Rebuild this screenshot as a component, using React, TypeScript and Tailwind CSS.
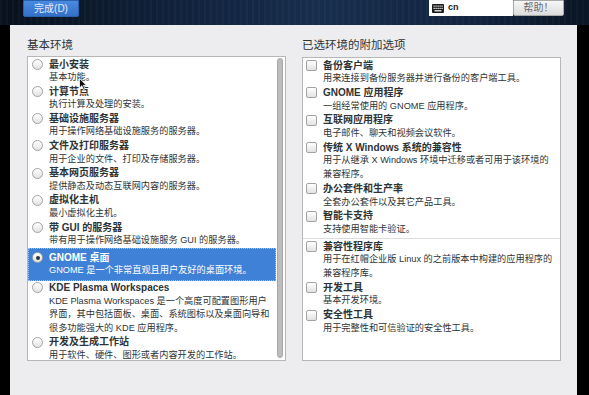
import React from "react";

type Item = { title: string; desc: React.ReactNode; selected?: boolean };

const envs: Item[] = [
  { title: "最小安装", desc: "基本功能。" },
  { title: "计算节点", desc: "执行计算及处理的安装。" },
  { title: "基础设施服务器", desc: "用于操作网络基础设施服务的服务器。" },
  { title: "文件及打印服务器", desc: "用于企业的文件、打印及存储服务器。" },
  { title: "基本网页服务器", desc: "提供静态及动态互联网内容的服务器。" },
  { title: "虚拟化主机", desc: "最小虚拟化主机。" },
  { title: "带 GUI 的服务器", desc: "带有用于操作网络基础设施服务 GUI 的服务器。" },
  { title: "GNOME 桌面", desc: "GNOME 是一个非常直观且用户友好的桌面环境。", selected: true },
  {
    title: "KDE Plasma Workspaces",
    desc: (
      <>
        KDE Plasma Workspaces 是一个高度可配置图形用户
        <br />
        界面，其中包括面板、桌面、系统图标以及桌面向导和
        <br />
        很多功能强大的 KDE 应用程序。
      </>
    ),
  },
  { title: "开发及生成工作站", desc: "用于软件、硬件、图形或者内容开发的工作站。" },
];

const addonsTop: Item[] = [
  { title: "备份客户端", desc: "用来连接到备份服务器并进行备份的客户端工具。" },
  { title: "GNOME 应用程序", desc: "一组经常使用的 GNOME 应用程序。" },
  { title: "互联网应用程序", desc: "电子邮件、聊天和视频会议软件。" },
  {
    title: "传统 X Windows 系统的兼容性",
    desc: (
      <>
        用于从继承 X Windows 环境中迁移或者可用于该环境的
        <br />
        兼容程序。
      </>
    ),
  },
  { title: "办公套件和生产率", desc: "全套办公套件以及其它产品工具。" },
  { title: "智能卡支持", desc: "支持使用智能卡验证。" },
];

const addonsBottom: Item[] = [
  {
    title: "兼容性程序库",
    desc: (
      <>
        用于在红帽企业版 Linux 的之前版本中构建的应用程序的
        <br />
        兼容程序库。
      </>
    ),
  },
  { title: "开发工具", desc: "基本开发环境。" },
  { title: "安全性工具", desc: "用于完整性和可信验证的安全性工具。" },
];

function Radio({ on }: { on?: boolean }) {
  return (
    <span className="flex h-[11px] w-[11px] items-center justify-center rounded-full border border-[#a3a3a3] bg-[linear-gradient(#ffffff,#e2e2e2)]">
      {on && <span className="h-[4px] w-[4px] rounded-full bg-[#2e3436]" />}
    </span>
  );
}

function Check() {
  return (
    <span className="block h-[11px] w-[11px] rounded-[2px] border border-[#a3a3a3] bg-[linear-gradient(#ffffff,#e2e2e2)]" />
  );
}

function EnvRow({ item }: { item: Item }) {
  const sel = item.selected;
  return (
    <div
      className={
        sel
          ? "flex border border-dotted border-[#9cc0ec] bg-[#3f81d6] py-[2px] pl-[3px] text-white"
          : "flex pl-[4px] text-[#2e3436]"
      }
    >
      <div className="flex h-[13.6px] items-center">
        <Radio on={sel} />
      </div>
      <div className="ml-[6px]">
        <div className="text-[10px] font-bold leading-[13.6px]">{item.title}</div>
        <div className="text-[9.2px] leading-[13.6px]">{item.desc}</div>
      </div>
    </div>
  );
}

function AddonRow({ item }: { item: Item }) {
  return (
    <div className="flex pl-[3px] text-[#2e3436]">
      <div className="flex h-[13.7px] items-center">
        <Check />
      </div>
      <div className="ml-[6px]">
        <div className="text-[10px] font-bold leading-[13.7px]">{item.title}</div>
        <div className="text-[9.2px] leading-[13.7px]">{item.desc}</div>
      </div>
    </div>
  );
}

function KeyboardIcon() {
  return (
    <svg width="12" height="9" viewBox="0 0 12 9">
      <rect x="0" y="0" width="12" height="9" rx="1" fill="#1b1b1b" />
      {[1.5, 3.5, 5.5, 7.5, 9.5].map((x) => (
        <rect key={"a" + x} x={x} y="1.5" width="1.2" height="1.2" fill="#fff" />
      ))}
      {[1.5, 3.5, 5.5, 7.5, 9.5].map((x) => (
        <rect key={"b" + x} x={x} y="3.8" width="1.2" height="1.2" fill="#fff" />
      ))}
      <rect x="2.5" y="6.2" width="7" height="1.2" fill="#fff" />
    </svg>
  );
}

export default function App() {
  return (
    <div
      className="relative flex h-[395px] w-[589px] flex-col overflow-hidden bg-black"
      style={{ fontFamily: '"Liberation Sans", "Noto Sans CJK SC", sans-serif' }}
    >
      {/* top bar */}
      <header className="flex h-[25px] shrink-0 items-start bg-[repeating-linear-gradient(90deg,rgba(255,255,255,0.025)_0px,rgba(255,255,255,0.025)_2px,transparent_2px,transparent_6px),linear-gradient(90deg,#08111d,#10223c_30%,#182e4e_55%,#12243f_80%,#0a1524)]">
        <button className="ml-[23px] h-[17px] w-[56px] rounded-b-[2px] border border-[#2a62b0] bg-[linear-gradient(#4a8ae0,#3470c8)] text-[10px] leading-[15px] text-[#e3ecf8]">
          完成(D)
        </button>
        <div className="flex-1" />
        <div className="flex h-[16px] w-[84px] items-center gap-[4px] bg-white pl-[3px]">
          <KeyboardIcon />
          <span className="text-[9px] font-bold text-[#222]">cn</span>
        </div>
        <button className="mr-[25px] h-[16px] w-[51px] rounded-b-[2px] border border-[#a9a9a9] bg-[linear-gradient(#f6f6f6,#dcdcdc)] text-[10px] leading-[14px] text-[#6a6a6a]">
          帮助！
        </button>
      </header>

      {/* content */}
      <div className="flex flex-1">
        <div className="ml-[10px] flex w-[567px] gap-[16px] bg-[#edecef] pl-[17px] pr-[16px] pt-[13px]">
          <section className="flex w-[259px] flex-col">
            <h2 className="mb-[4px] text-[11.5px] leading-[14px] text-[#2e3436]">基本环境</h2>
            <div className="flex h-[305px] border border-[#b7b7b7] bg-white">
              <div className="flex-1 pt-[0.5px]">
                {envs.map((e) => (
                  <EnvRow key={e.title} item={e} />
                ))}
              </div>
              <div className="ml-[1px] mr-[2px] mb-[2px] mt-[1px] w-[6px] rounded-[3px] border border-[#a9a9a9] bg-[#bcbcbc]" />
            </div>
          </section>

          <section className="flex w-[259px] flex-col">
            <h2 className="mb-[5px] text-[11.5px] leading-[14px] text-[#2e3436]">已选环境的附加选项</h2>
            <div className="h-[304px] border border-[#b7b7b7] bg-white pt-[0.5px]">
              {addonsTop.map((e) => (
                <AddonRow key={e.title} item={e} />
              ))}
              <div className="my-[1px] h-px bg-[#dcdcdc]" />
              {addonsBottom.map((e) => (
                <AddonRow key={e.title} item={e} />
              ))}
            </div>
          </section>
        </div>
      </div>

      {/* mouse pointer */}
      <svg className="absolute left-[79px] top-[78px]" width="8" height="12" viewBox="0 0 8 12">
        <path d="M0.5 0.5 L0.5 10 L2.8 7.8 L4.5 11.5 L6 10.8 L4.3 7.3 L7.5 7.3 Z" fill="#111" stroke="#fff" strokeWidth="0.8" />
      </svg>
    </div>
  );
}
